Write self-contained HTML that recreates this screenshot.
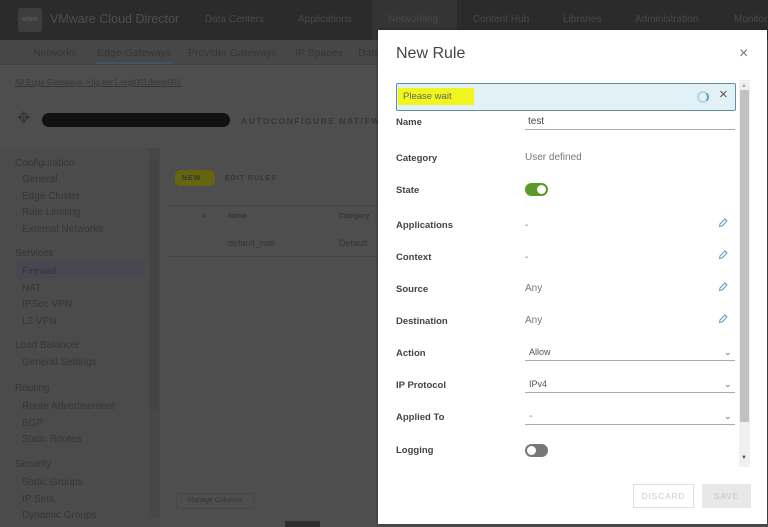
<!DOCTYPE html>
<html style="background:#4e4e4e"><head><meta charset="utf-8"><style>
*{margin:0;padding:0;box-sizing:border-box}
body{width:768px;height:527px;overflow:hidden;background:#4e4e4e;font-family:"Liberation Sans",sans-serif;position:relative}
.a{position:absolute;white-space:nowrap}
.hdr{left:0;top:0;width:768px;height:40px;background:#2b2b2b}
.sub{left:0;top:40px;width:768px;height:25px;background:#474747;border-bottom:1px solid #424242}
.dim{color:#363636;font-size:10px}
.side{left:0;top:148px;width:160px;height:379px;background:#4b4b4b}
.m{left:378px;top:30px;width:389px;height:494px;background:#fff;box-shadow:0 0 3px rgba(0,0,0,.4)}
.lb{left:18px;font-size:9.5px;font-weight:bold;color:#444}
.v{left:147px;font-size:10px;color:#777}
.ul{left:147px;width:210px;height:1px;background:#aaa}
.chev{left:346px;font-size:9px;color:#666}
</style></head><body>
<div class="a hdr"></div>
<div class="a" style="left:18px;top:8px;width:24px;height:24px;background:#3e3e3e;border-radius:3px;color:#5a5a5a;font-size:7px;font-weight:bold;line-height:24px;text-align:center">vmw</div>
<div class="a" style="left:50px;top:12px;font-size:12.5px;color:#4e4e4e">VMware Cloud Director</div>
<div class="a" style="left:205px;top:14px;font-size:10px;color:#484848">Data Centers</div>
<div class="a" style="left:298px;top:14px;font-size:10px;color:#484848">Applications</div>
<div class="a" style="left:372px;top:0;width:85px;height:40px;background:#343434"></div>
<div class="a" style="left:388px;top:14px;font-size:10px;color:#484848">Networking</div>
<div class="a" style="left:473px;top:14px;font-size:10px;color:#484848">Content Hub</div>
<div class="a" style="left:563px;top:14px;font-size:10px;color:#484848">Libraries</div>
<div class="a" style="left:635px;top:14px;font-size:10px;color:#484848">Administration</div>
<div class="a" style="left:734px;top:14px;font-size:10px;color:#484848">Monitor</div>
<div class="a sub"></div>
<div class="a dim" style="left:33px;top:47px;font-size:10.5px">Networks</div>
<div class="a dim" style="left:97px;top:47px;font-size:10.5px">Edge Gateways</div>
<div class="a" style="left:95px;top:62px;width:76px;height:2px;background:#3d5566"></div>
<div class="a dim" style="left:188px;top:47px;font-size:10.5px">Provider Gateways</div>
<div class="a dim" style="left:295px;top:47px;font-size:10.5px">IP Spaces</div>
<div class="a dim" style="left:358px;top:47px;font-size:10.5px">Data</div>
<div class="a dim" style="left:15px;top:78px;font-size:8px;text-decoration:underline">All Edge Gateways &gt; <span style="text-decoration:none">jlg-tier1-regt001demo001</span></div>
<div class="a" style="left:17px;top:108px;font-size:16px;color:#363636">✥</div>
<div class="a" style="left:42px;top:113px;width:188px;height:14px;background:#111;border-radius:7px"></div>
<div class="a" style="left:241px;top:116px;font-size:8.5px;letter-spacing:1.5px;color:#363636;font-weight:bold">AUTOCONFIGURE NAT/FW</div>
<div class="a side"></div>
<div class="a" style="left:149px;top:148px;width:11px;height:370px;background:#474747"></div>
<div class="a" style="left:150px;top:160px;width:9px;height:250px;background:#444"></div>
<div class="a" style="left:15px;top:156px;font-size:10px;color:#363636;line-height:16.5px">Configuration</div>
<div class="a" style="left:22px;top:172px;font-size:10px;color:#363636;line-height:16.5px">General<br>Edge Cluster<br>Rate Limiting<br>External Networks</div>
<div class="a" style="left:15px;top:248px;font-size:10px;color:#363636">Services</div>
<div class="a" style="left:17px;top:262px;width:130px;height:16px;background:#484852"></div>
<div class="a" style="left:22px;top:264px;font-size:10px;color:#363636;line-height:16.5px">Firewall<br>NAT<br>IPSec VPN<br>L2 VPN</div>
<div class="a" style="left:15px;top:340px;font-size:10px;color:#363636">Load Balancer</div>
<div class="a" style="left:22px;top:357px;font-size:10px;color:#363636">General Settings</div>
<div class="a" style="left:15px;top:383px;font-size:10px;color:#363636">Routing</div>
<div class="a" style="left:22px;top:399px;font-size:10px;color:#363636;line-height:16.5px">Route Advertisement<br>BGP<br>Static Routes</div>
<div class="a" style="left:15px;top:459px;font-size:10px;color:#363636">Security</div>
<div class="a" style="left:22px;top:475px;font-size:10px;color:#363636;line-height:16.5px">Static Groups<br>IP Sets<br>Dynamic Groups</div>
<div class="a" style="left:175px;top:170px;width:40px;height:16px;background:#65650f;border-radius:6px"></div>
<div class="a dim" style="left:182px;top:175px;font-size:7px;font-weight:bold;letter-spacing:1px">NEW</div>
<div class="a dim" style="left:225px;top:175px;font-size:7px;font-weight:bold;letter-spacing:1px">EDIT RULES</div>
<div class="a" style="left:168px;top:205px;width:210px;height:24px;border-top:1px solid #474747"></div>
<div class="a dim" style="left:202px;top:213px;font-size:7px">#</div>
<div class="a dim" style="left:228px;top:213px;font-size:7px;font-weight:bold">Name</div>
<div class="a dim" style="left:339px;top:213px;font-size:7px;font-weight:bold">Category</div>
<div class="a" style="left:168px;top:256px;width:210px;height:1px;background:#474747"></div>
<div class="a dim" style="left:228px;top:238px;font-size:9px">default_rule</div>
<div class="a dim" style="left:339px;top:238px;font-size:9px">Default</div>
<div class="a" style="left:176px;top:493px;width:78px;height:16px;border:1px solid #474747;border-radius:2px;font-size:7px;color:#363636;line-height:14px;text-align:center">Manage Columns</div>
<div class="a" style="left:285px;top:521px;width:35px;height:6px;background:#2e2e2e"></div>
<div class="a m">
<div class="a" style="left:18px;top:15px;font-size:16px;color:#444">New Rule</div>
<div class="a" style="left:361px;top:15px;font-size:16px;color:#777">×</div>
<div class="a" style="left:18px;top:53px;width:340px;height:28px;background:#e1f1f6;border:1px solid #5f8fa0;border-radius:2px"></div>
<div class="a" style="left:20px;top:58px;width:76px;height:17px;background:#f0f51d"></div>
<div class="a" style="left:25px;top:61px;font-size:9.5px;color:#666">Please wait</div>
<div class="a" style="left:319px;top:61px;width:12px;height:12px;border:2px solid #b5d5e5;border-right-color:#6aa0c0;border-radius:50%"></div>
<div class="a" style="left:341px;top:56px;font-size:15px;color:#555">×</div>
<div class="a" style="left:361px;top:50px;width:11px;height:387px;background:#f0f0f0"></div>
<div class="a" style="left:362px;top:60px;width:9px;height:332px;background:#c1c1c1"></div>
<div class="a" style="left:363px;top:425px;font-size:6px;color:#555">▼</div>
<div class="a" style="left:363px;top:53px;font-size:6px;color:#aaa">▲</div>
<div class="a lb" style="top:87px">Name</div><div class="a v" style="top:86px;color:#444;left:150px">test</div><div class="a ul" style="top:99px"></div>
<div class="a lb" style="top:123px">Category</div><div class="a v" style="top:122px">User defined</div>
<div class="a lb" style="top:155px">State</div>
<div class="a" style="left:147px;top:153px;width:23px;height:13px;background:#5a9a2a;border-radius:7px"></div>
<div class="a" style="left:159px;top:155px;width:9px;height:9px;background:#fff;border-radius:50%"></div>
<div class="a lb" style="top:190px">Applications</div><div class="a v" style="top:190px">-</div>
<div class="a lb" style="top:222px">Context</div><div class="a v" style="top:222px">-</div>
<div class="a lb" style="top:254px">Source</div><div class="a v" style="top:253px">Any</div>
<div class="a lb" style="top:286px">Destination</div><div class="a v" style="top:285px">Any</div>
<svg class="a" style="left:340px;top:186px" width="10" height="140" viewBox="0 0 10 140" fill="none" stroke="#5a9ac0" stroke-width="1"><g id="p"><path d="M2 8 L7 3 L9 5 L4 10 L1.5 10.5 Z"/></g><use href="#p" y="32"/><use href="#p" y="64"/><use href="#p" y="96"/></svg>
<div class="a lb" style="top:318px">Action</div><div class="a v" style="top:317px;color:#555;left:151px;font-size:9px">Allow</div><div class="a chev" style="top:317px">⌄</div><div class="a ul" style="top:330px"></div>
<div class="a lb" style="top:350px">IP Protocol</div><div class="a v" style="top:349px;color:#555;left:151px;font-size:9px">IPv4</div><div class="a chev" style="top:349px">⌄</div><div class="a ul" style="top:362px"></div>
<div class="a lb" style="top:382px">Applied To</div><div class="a v" style="top:381px;left:151px">-</div><div class="a chev" style="top:381px">⌄</div><div class="a ul" style="top:394px"></div>
<div class="a lb" style="top:415px">Logging</div>
<div class="a" style="left:147px;top:414px;width:23px;height:13px;background:#777;border-radius:7px"></div>
<div class="a" style="left:149px;top:416px;width:9px;height:9px;background:#fff;border-radius:50%"></div>
<div class="a" style="left:255px;top:454px;width:61px;height:24px;border:1px solid #e0e0e0;font-size:8.5px;letter-spacing:.8px;color:#ccc;line-height:22px;text-align:center">DISCARD</div>
<div class="a" style="left:324px;top:454px;width:49px;height:24px;background:#e8e8e8;font-size:8.5px;letter-spacing:.8px;color:#c8c8c8;line-height:24px;text-align:center">SAVE</div>
</div>
</body></html>
